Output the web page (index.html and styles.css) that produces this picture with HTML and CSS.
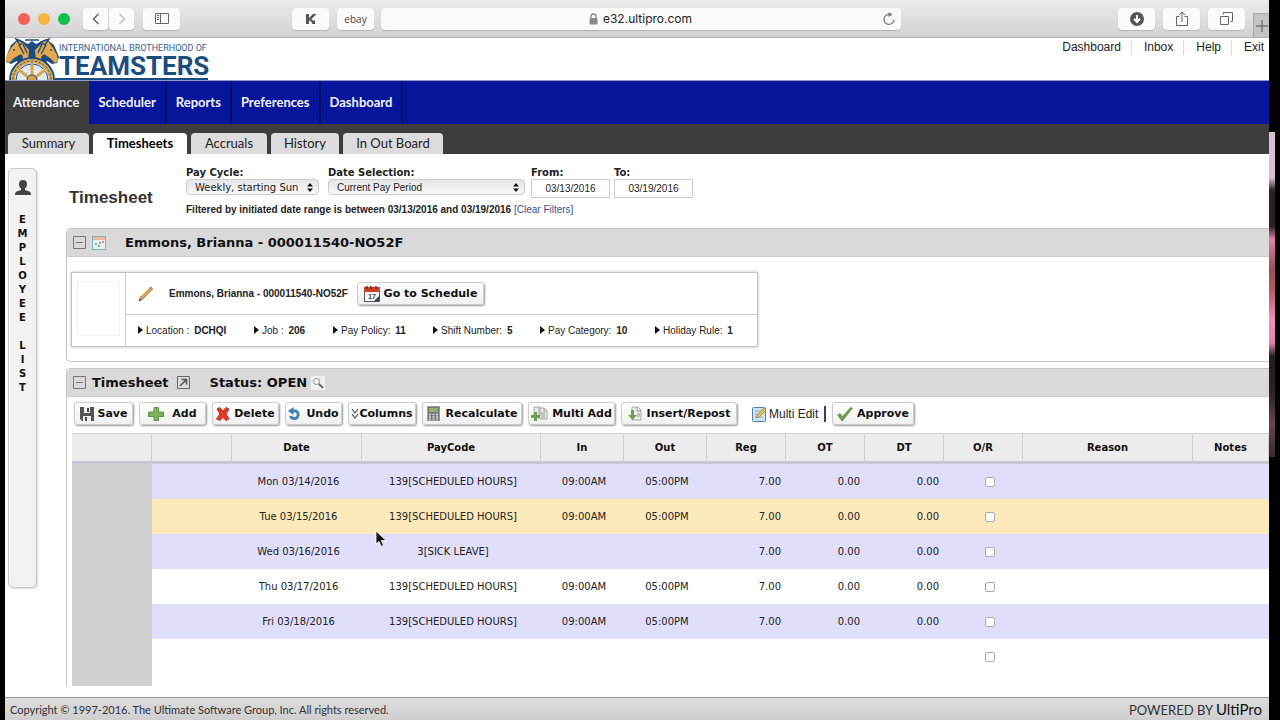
FILE: index.html
```html
<!DOCTYPE html>
<html lang="en">
<head>
  <meta charset="UTF-8">
  <meta name="viewport" content="width=device-width, initial-scale=1.0">
  <title>UltiPro - Timesheet</title>
  <link rel="stylesheet" href="styles.css">
</head>
<body>
  <div class="window">

    <!-- Browser toolbar -->
    <div class="browser">
      <div class="lights"><i class="red"></i><i class="yellow"></i><i class="green"></i></div>
      <div class="history">
        <button type="button" aria-label="Back"><svg width="12" height="14" viewBox="0 0 12 14"><path d="M8.500 2 3.500 7l5 5" fill="none" stroke="#666" stroke-width="1.500"/></svg></button>
        <button type="button" aria-label="Forward"><svg width="12" height="14" viewBox="0 0 12 14"><path d="m3.500 2 5 5-5 5" fill="none" stroke="#c4c4c4" stroke-width="1.500"/></svg></button>
      </div>
      <button type="button" class="tool sidebar-btn" aria-label="Sidebar"><svg width="16" height="13" viewBox="0 0 16 13"><path d="M1.500 1.500h13v10h-13zM6.500 1.500v10M3 3.500h2M3 5.500h2M3 7.500h2" fill="none" stroke="#666"/></svg></button>
      <button type="button" class="tool fav-k" aria-label="Favorite"><svg width="12" height="12" viewBox="0 0 12 12"><path d="M1 1h3v4l4-4h3.500L6 6.500 4 8v3H1zM6 6l3 2 1-1v4H6.500l1-1L5 8z" fill="#555"/></svg></button>
      <button type="button" class="tool fav-ebay">ebay</button>
      <div class="address">
        <div class="url">
          <svg width="9" height="12" viewBox="0 0 9 12"><path d="M2 6V3.500a2.500 2.500 0 0 1 5 0V6" fill="none" stroke="#8a8a8a" stroke-width="1.300"/><rect x="0.500" y="5" width="8" height="6.500" rx="1" fill="#8a8a8a"/></svg>
          <span>e32.ultipro.com</span>
        </div>
        <svg width="14" height="14" viewBox="0 0 14 14"><path d="M8.500 2.600A5 5 0 1 0 12 7.500" fill="none" stroke="#777" stroke-width="1.200"/><path d="M6.500 0v5l4-2.500z" fill="#777"/></svg>
      </div>
      <div class="tools-right">
        <button type="button" class="tool" aria-label="Downloads"><svg width="14" height="14" viewBox="0 0 14 14"><circle cx="7" cy="7" r="7" fill="#555"/><path d="M7 3v6M4 6.800l3 3.200 3-3.200" fill="none" stroke="#fff" stroke-width="2"/></svg></button>
        <button type="button" class="tool" aria-label="Share"><svg width="12" height="16" viewBox="0 0 12 16"><path d="M3.500 5.500H.5v9h11v-9h-3M6 11V1M3 4l3-3 3 3" fill="none" stroke="#666"/></svg></button>
        <button type="button" class="tool" aria-label="Tabs"><svg width="13" height="13" viewBox="0 0 13 13"><path d="M.5 4.500h8v8h-8zM3.500 2.500v-2h9v9h-2" fill="none" stroke="#666"/></svg></button>
      </div>
      <button type="button" class="new-tab" aria-label="New tab"><svg width="12" height="12" viewBox="0 0 12 12"><path d="M6 0v12M0 6h12" stroke="#555"/></svg></button>
    </div>

    <header class="top">
      <svg class="logo" width="210" height="43" viewBox="0 0 210 43">
        <clipPath id="logo-clip"><rect width="204" height="42"/></clipPath>
        <g clip-path="url(#logo-clip)">
          <!-- horses -->
          <path d="M13 1 23 6l4-3 4 3 10-5 8 6 5 12-2 6-5 1-5-3-3 7H15l-3-7-6 3-5-2 1-7L6 7z" fill="#1c4d80"/>
          <path d="M12 3l6 2 6 7-1 10-6 4 1-7-2-3-7 4-5 5-3-2 1-6 4-7z" fill="#e5a94a"/>
          <path d="M43 3l-6 2-7 7 1 10 6 4-1-7 3-3 6 4 5 5 3-2-1-6-4-7z" fill="#e5a94a"/>
          <path d="M11 1l4 6 3-3zM44 1l-4 6-4-3zM18 6l4 9M14 7l5 9M37 6l-4 9M41 7l-5 9M20 2l14 0" fill="#e5a94a" stroke="#1c4d80" stroke-width="1.400"/>
          <circle cx="9" cy="12" r="1" fill="#1c4d80"/><circle cx="46" cy="12" r="1" fill="#1c4d80"/>
          <!-- wheel -->
          <circle cx="27" cy="42" r="22" fill="#dfe9ee" stroke="#1c4d80" stroke-width="2"/>
          <circle cx="27" cy="42" r="19" fill="none" stroke="#d9a54c" stroke-width="4"/>
          <circle cx="27" cy="42" r="19" fill="none" stroke="#1c4d80" stroke-width="1" stroke-dasharray="2 2"/>
          <circle cx="27" cy="42" r="16" fill="none" stroke="#1c4d80"/>
          <path d="M27 42V26M27 42 14 32M27 42l13-10" stroke="#d9a54c" stroke-width="3"/>
          <circle cx="27" cy="42" r="5" fill="#d9a54c" stroke="#1c4d80"/>
        </g>
        <path d="M50 41h153" stroke="#1c4d80" stroke-width="2"/>
        <text x="54" y="13" class="logo-small">INTERNATIONAL BROTHERHOOD OF</text>
        <text x="54" y="37" class="logo-big">TEAMSTERS</text>
      </svg>
      <nav class="user-links">
        <a href="#">Dashboard</a>
        <a href="#">Inbox</a>
        <a href="#">Help</a>
        <a href="#">Exit</a>
      </nav>
    </header>

    <nav class="main-nav">
      <a href="#" class="active">Attendance</a>
      <a href="#">Scheduler</a>
      <a href="#">Reports</a>
      <a href="#">Preferences</a>
      <a href="#">Dashboard</a>
    </nav>

    <nav class="tabs">
      <a href="#" class="tab-summary">Summary</a>
      <a href="#" class="tab-timesheets active">Timesheets</a>
      <a href="#" class="tab-accruals">Accruals</a>
      <a href="#" class="tab-history">History</a>
      <a href="#" class="tab-board">In Out Board</a>
    </nav>

    <div class="content">
      <aside class="employee-list">
        <svg width="16" height="15" viewBox="0 0 16 15"><path d="M8 0c2.500 0 4 1.500 4 4 0 2-.8 3.700-2 4.600V10l4.500 1.600q1.500.6 1.500 3.400H0q0-2.800 1.500-3.400L6 10V8.600C4.800 7.700 4 6 4 4c0-2.500 1.500-4 4-4z" fill="#444"/></svg>
        <div class="letters">E<br>M<br>P<br>L<br>O<br>Y<br>E<br>E<br><br>L<br>I<br>S<br>T</div>
      </aside>

      <main>
        <form class="filters">
          <h1>Timesheet</h1>
          <div class="filter-body">
            <div class="fields">
              <div class="field cycle">
                <label for="pay-cycle">Pay Cycle:</label>
                <div class="select"><select id="pay-cycle"><option>Weekly, starting Sun</option></select>
                <svg width="6" height="9" viewBox="0 0 6 9"><path d="M3 0l3 3.500H0zM3 9l3-3.500H0z" fill="#111"/></svg></div>
              </div>
              <div class="field selection">
                <label for="date-selection">Date Selection:</label>
                <div class="select"><select id="date-selection"><option>Current Pay Period</option></select>
                <svg width="6" height="9" viewBox="0 0 6 9"><path d="M3 0l3 3.500H0zM3 9l3-3.500H0z" fill="#111"/></svg></div>
              </div>
              <div class="field date">
                <label for="from">From:</label>
                <input type="text" id="from" value="03/13/2016">
              </div>
              <div class="field date">
                <label for="to">To:</label>
                <input type="text" id="to" value="03/19/2016">
              </div>
            </div>
            <p class="filter-note">Filtered by initiated date range is between 03/13/2016 and 03/19/2016 <a href="#">[Clear Filters]</a></p>
          </div>
        </form>

        <section class="panel employee">
          <div class="panel-head">
            <button type="button" class="box" aria-label="Collapse"><svg width="13" height="13" viewBox="0 0 13 13"><path d="M.5.5h12v12H.5zM3 6.500h7" fill="none" stroke="#777"/></svg></button>
            <svg width="14" height="14" viewBox="0 0 14 14"><rect x="0.500" y="0.500" width="13" height="13" fill="#e8f0f0" stroke="#88aebd"/><path d="M1 1h12v3H1z" fill="#edb7a2"/><path d="M3 7h2v2H3zM7 6h2v2H7zM6 9h2v2H6z" fill="#88b98b"/><path d="M10 5h2v2h-2z" fill="#e58670"/></svg>
            <h2>Emmons, Brianna - 000011540-NO52F</h2>
          </div>
          <div class="card">
            <div class="photo"><div></div></div>
            <div class="card-body">
              <div class="card-name">
                <svg width="16" height="16" viewBox="0 0 16 16"><path d="M1 15l2-5 9-9 2.500 2-9 9.500z" fill="#e5a45b" stroke="#7c654e" stroke-width="0.700"/><path d="M3 10l9-9" stroke="#f7d8a8"/><path d="M1 15l1-2.500L3.500 14z" fill="#333"/><path d="M11 2l1.500-1.500 2.500 2L13.500 4z" fill="#999"/></svg>
                <strong>Emmons, Brianna - 000011540-NO52F</strong>
                <button type="button" class="btn schedule"><svg width="16" height="16" viewBox="0 0 16 16"><path d="M.5 1.500h15v14H.5z" fill="#f5f5f5" stroke="#555"/><path d="M0 1h16v5H0z" fill="#c8402c"/><path d="M3 0v3M7 0v3M12 0v3" stroke="#782519" stroke-width="1.500"/><path d="M15 10v5h-5z" fill="#444"/><text x="4" y="13" class="cal-day">17</text></svg>Go to Schedule</button>
              </div>
              <ul class="facts">
                <li class="location">Location : <b>DCHQI</b></li>
                <li class="job">Job : <b>206</b></li>
                <li class="policy">Pay Policy: <b>11</b></li>
                <li class="shift">Shift Number: <b>5</b></li>
                <li class="category">Pay Category: <b>10</b></li>
                <li>Holiday Rule: <b>1</b></li>
              </ul>
            </div>
          </div>
        </section>

        <section class="panel timesheet">
          <div class="panel-head">
            <button type="button" class="box" aria-label="Collapse"><svg width="13" height="13" viewBox="0 0 13 13"><path d="M.5.5h12v12H.5zM3 6.500h7" fill="none" stroke="#777"/></svg></button>
            <h2>Timesheet</h2>
            <button type="button" class="box open" aria-label="Open"><svg width="13" height="13" viewBox="0 0 13 13"><path d="M.5.5h12v12H.5z" fill="none" stroke="#666"/><path d="M3 10l6-6M4.500 3.500h5v5" fill="none" stroke="#555" stroke-width="1.500"/></svg></button>
            <h2>Status: OPEN</h2>
            <button type="button" class="box search" aria-label="Status details"><svg width="14" height="14" viewBox="0 0 14 14"><rect width="14" height="14" fill="#f1f1f1"/><circle cx="5.500" cy="5.500" r="3" fill="#fff" stroke="#888"/><path d="M8 8l4 4" stroke="#666" stroke-width="2"/></svg></button>
          </div>

          <div class="toolbar">
            <button type="button" class="btn save"><svg width="14" height="14" viewBox="0 0 14 14"><path d="M0 0h14v14H2l-2-2z" fill="#555"/><path d="M4 0h6v6H4zM3 9h8v5H3z" fill="#eee"/><path d="M5 10h2v4H5zM7 1h2v4H7z" fill="#444"/></svg>Save</button>
            <button type="button" class="btn add"><svg width="16" height="14" viewBox="0 0 16 14"><path d="M6 .5h4.500V5h5v4.500h-5v4H6v-4H.5V5H6z" fill="#7bb35c" stroke="#609447"/></svg>Add</button>
            <button type="button" class="btn delete"><svg width="14" height="14" viewBox="0 0 14 14"><path d="M1 2l3-1.500L7 4l3-3.500L13 2l-3 5 3 5-3 1.500-3-3-3 3L.5 12 4 7z" fill="#dd3a28" stroke="#b52f22"/></svg>Delete</button>
            <button type="button" class="btn undo"><svg width="14" height="14" viewBox="0 0 14 14"><path d="M4 4h4a4 4 0 1 1-5.500 5" fill="none" stroke="#447fb4" stroke-width="3"/><path d="M0 4 5.500 0v8z" fill="#447fb4"/></svg>Undo</button>
            <button type="button" class="btn columns"><svg width="8" height="12" viewBox="0 0 8 12"><path d="M1 1l3 4 3-4M1 6l3 4 3-4" fill="none" stroke="#555" stroke-width="1.200"/></svg>Columns</button>
            <button type="button" class="btn recalculate"><svg width="13" height="15" viewBox="0 0 13 15"><rect x="0.500" y="0.500" width="12" height="14" fill="#777" stroke="#999"/><path d="M2 2h9v4H2z" fill="#8bb36f"/><path d="M2 8.500h9M2 11h9M2 13.200h9" stroke="#ddd" stroke-width="1.300" stroke-dasharray="2 1.500"/></svg>Recalculate</button>
            <button type="button" class="btn multi-add"><svg width="17" height="15" viewBox="0 0 17 15"><path d="M3 1h6v9H3zM8 2h5l3 3v8H8z" fill="#e8e8e8" stroke="#aaa"/><path d="M13 2v3h3M10 7h4M10 9h4M10 11h4" fill="none" stroke="#999"/><path d="M3 6h3v3h3v3H6v3H3v-3H0V9h3z" fill="#719d52"/></svg>Multi Add</button>
            <button type="button" class="btn insert"><svg width="15" height="15" viewBox="0 0 15 15"><path d="M4 1h6l3 3v10H4z" fill="#eee" stroke="#aaa"/><path d="M9 1v4h4M9 8h3M9 10h3" fill="none" stroke="#999"/><path d="M3 4h3v5h3l-4.500 5L0 9h3z" fill="#719d52"/></svg>Insert/Repost</button>
            <button type="button" class="multi-edit"><svg width="14" height="16" viewBox="0 0 14 16"><rect x="0.500" y="1.500" width="13" height="14" rx="1" fill="#cfe4f3" stroke="#4d83b0"/><path d="M3 5h6M3 8h5M3 11h7" stroke="#78a6ca"/><path d="M4 12l1-3 7-7 2 2-7 7z" fill="#efbd4e" stroke="#a7803c" stroke-width="0.700"/></svg>Multi Edit</button>
            <button type="button" class="btn approve"><svg width="16" height="14" viewBox="0 0 16 14"><path d="M0 8l3-2 2.500 3L13.500 0 16 1 6 14H4.500z" fill="#6f9f52"/></svg>Approve</button>
          </div>

          <table>
            <colgroup>
              <col class="c-blank"><col class="c-blank"><col class="c-date"><col class="c-code"><col class="c-time"><col class="c-time">
              <col class="c-hours"><col class="c-hours"><col class="c-hours"><col class="c-or"><col class="c-reason"><col>
            </colgroup>
            <thead>
              <tr><th></th><th></th><th>Date</th><th>PayCode</th><th>In</th><th>Out</th><th>Reg</th><th>OT</th><th>DT</th><th>O/R</th><th>Reason</th><th>Notes</th></tr>
            </thead>
            <tbody>
              <tr class="alt"><td></td><td></td><td>Mon 03/14/2016</td><td>139[SCHEDULED HOURS]</td><td>09:00AM</td><td>05:00PM</td><td class="num">7.00</td><td class="num">0.00</td><td class="num">0.00</td><td class="or"><input type="checkbox" aria-label="Override Mon"></td><td></td><td></td></tr>
              <tr class="hover"><td></td><td></td><td>Tue 03/15/2016</td><td>139[SCHEDULED HOURS]</td><td>09:00AM</td><td>05:00PM</td><td class="num">7.00</td><td class="num">0.00</td><td class="num">0.00</td><td class="or"><input type="checkbox" aria-label="Override Tue"></td><td></td><td></td></tr>
              <tr class="alt"><td></td><td></td><td>Wed 03/16/2016</td><td>3[SICK LEAVE]</td><td></td><td></td><td class="num">7.00</td><td class="num">0.00</td><td class="num">0.00</td><td class="or"><input type="checkbox" aria-label="Override Wed"></td><td></td><td></td></tr>
              <tr><td></td><td></td><td>Thu 03/17/2016</td><td>139[SCHEDULED HOURS]</td><td>09:00AM</td><td>05:00PM</td><td class="num">7.00</td><td class="num">0.00</td><td class="num">0.00</td><td class="or"><input type="checkbox" aria-label="Override Thu"></td><td></td><td></td></tr>
              <tr class="alt"><td></td><td></td><td>Fri 03/18/2016</td><td>139[SCHEDULED HOURS]</td><td>09:00AM</td><td>05:00PM</td><td class="num">7.00</td><td class="num">0.00</td><td class="num">0.00</td><td class="or"><input type="checkbox" aria-label="Override Fri"></td><td></td><td></td></tr>
              <tr class="last"><td></td><td></td><td></td><td></td><td></td><td></td><td></td><td></td><td></td><td class="or"><input type="checkbox" aria-label="Override new row"></td><td></td><td></td></tr>
            </tbody>
          </table>
        </section>
      </main>
    </div>

    <footer>
      <span>Copyright © 1997-2016. The Ultimate Software Group, Inc. All rights reserved.</span>
      <span class="powered">POWERED BY <b>UltiPro</b></span>
    </footer>
  </div>

  <!-- desktop behind the window -->
  <div class="desktop"></div>

  <svg class="pointer" width="12" height="18" viewBox="0 0 12 18"><path d="M1 1v13l3-2.600 2.200 5 2.300-1L6.300 10.500H11z" fill="#111" stroke="#fff" stroke-width="0.800"/></svg>
</body>
</html>
```
FILE: styles.css
```css
* {
  box-sizing: border-box;
}
body {
  margin: 0;
  background: #000;
  display: flex;
  min-height: 100vh;
  font-family: "DejaVu Sans", Verdana, sans-serif;
  font-size: 11px;
  color: #222;
}
a {
  text-decoration: none;
  color: inherit;
}
button {
  font-family: inherit;
  padding: 0;
  cursor: pointer;
}
svg {
  display: block;
  flex: none;
}
.window {
  flex: 1;
  min-width: 0;
  margin-left: 5px;
  background: #fff;
  display: flex;
  flex-direction: column;
  overflow: hidden;
}
.desktop {
  width: 6px;
  height: 325px;
  margin: 132px 5px 0 0;
  background: linear-gradient(#d9bfd3 0%, #d9bfd3 14%, #2a2226 18%, #2a2226 29%, #e07fae 33%, #96505e 42%, #b45760 48%, #f78dbb 58%, #e07fae 65%, #241d1b 69%, #2b2224 80%, #6b4350 90%, #3b2a30 100%);
}

/* browser toolbar */
.browser {
  height: 38px;
  display: flex;
  align-items: center;
  background: linear-gradient(#ebebeb, #d3d3d3);
  border-bottom: 1px solid #b0b0b0;
}
.lights {
  display: flex;
  gap: 8px;
  margin-left: 13px;
}
.lights i {
  width: 12px;
  height: 12px;
  border-radius: 50%;
}
.red { background: #f4605a; }
.yellow { background: #fbb43f; }
.green { background: #14c04d; }
.history {
  display: flex;
  gap: 1px;
  margin-left: 13px;
}
.browser button {
  height: 22px;
  border: none;
  background: #fbfbfb;
  border-radius: 4px;
  box-shadow: 0 1px 1px #b5b5b5;
  display: flex;
  align-items: center;
  justify-content: center;
}
.history button {
  width: 25px;
}
.browser .tool {
  width: 37px;
  font: 10px "Open Sans", sans-serif;
  color: #444;
}
.browser .sidebar-btn { margin-left: 9px; }
.browser .fav-k { margin-left: 112px; }
.browser .fav-ebay { margin-left: 8px; }
.address {
  flex: 1;
  max-width: 520px;
  height: 22px;
  margin-left: 7px;
  padding: 0 5px 0 18px;
  display: flex;
  align-items: center;
  background: #fafafa;
  border-radius: 4px;
  box-shadow: 0 1px 1px #b0b0b0;
}
.url {
  flex: 1;
  display: flex;
  justify-content: center;
  align-items: center;
  gap: 5px;
  font: 12px Inter, sans-serif;
  color: #222;
}
.tools-right {
  display: flex;
  gap: 8px;
  margin-left: auto;
}
.browser .new-tab {
  align-self: flex-end;
  width: 16px;
  height: 24px;
  margin-left: 8px;
  border: 1px solid #aaa;
  border-width: 1px 0 0 1px;
  border-radius: 0;
  background: #c4c4c4;
  box-shadow: none;
}

/* header */
.top {
  height: 43px;
  display: flex;
  justify-content: space-between;
  border-bottom: 1px solid #8d9ac8;
}
.logo-small {
  font: 9px Roboto, sans-serif;
  fill: #30618f;
}
.logo-big {
  font: bold 26px Roboto, sans-serif;
  fill: #1c4d80;
}
.cal-day {
  font: bold 7px "Liberation Sans", Arial, sans-serif;
  fill: #444;
}
.user-links {
  display: flex;
  align-items: flex-start;
  padding-top: 2px;
  font: 12px/15px "Liberation Sans", Arial, sans-serif;
}
.user-links a {
  padding: 0 10px 0 12px;
  border-right: 1px solid #ddd;
}
.user-links a:last-child {
  padding-right: 5px;
  border: none;
}
.main-nav {
  display: flex;
  height: 43px;
  background: #07159a;
  font: bold 13px/42px Lato, sans-serif;
  color: #f2f2f8;
}
.main-nav a {
  padding: 0 9px;
  border-right: 2px solid #050e68;
}
.main-nav a.active {
  padding: 0 8px;
  background: #3d3d3d;
  border-color: #3d3d3d;
}
.tabs {
  display: flex;
  align-items: flex-end;
  gap: 4px;
  height: 30px;
  padding-left: 3px;
  background: #3d3d3d;
  font: 13px/21px Lato, sans-serif;
  text-align: center;
}
.tabs a {
  background: #dcdcdc;
  border-radius: 4px 4px 0 0;
}
.tabs a.active {
  background: #fff;
  font-weight: bold;
  color: #000;
}
.tab-summary { width: 81px; }
.tab-timesheets { width: 94px; }
.tab-accruals { width: 76px; }
.tab-history { width: 68px; }
.tab-board { width: 100px; }

/* content */
.content {
  flex: 1;
  display: flex;
}
.employee-list {
  width: 29px;
  height: 420px;
  margin: 14px 29px 0 3px;
  padding-top: 11px;
  border: 1px solid #c8c8c8;
  border-radius: 5px;
  background: #f2f2f2;
  box-shadow: 1px 1px 2px #ddd;
  display: flex;
  flex-direction: column;
  align-items: center;
}
.letters {
  margin-top: 18px;
  font-weight: bold;
  font-size: 10px;
  line-height: 14px;
  text-align: center;
  color: #111;
}
main {
  flex: 1;
  min-width: 0;
}
.filters {
  display: flex;
  height: 74px;
  padding: 12px 0 0 3px;
}
.filters h1 {
  width: 117px;
  margin: 22px 0 0;
  font: bold 17px/20px "Liberation Sans", Arial, sans-serif;
  color: #333;
}
.fields {
  display: flex;
}
.field label {
  display: block;
  font-weight: bold;
  font-size: 10px;
  line-height: 13px;
}
.cycle { width: 133px; margin-right: 9px; }
.selection { width: 197px; margin-right: 6px; }
.date { width: 79px; margin-right: 4px; }
.select {
  display: flex;
  align-items: center;
  height: 16px;
  padding-right: 5px;
  border: 1px solid #ccc;
  border-radius: 4px;
  background: linear-gradient(#e6e6e6, #f8f8f8);
}
.select select {
  flex: 1;
  height: 14px;
  padding: 0 0 0 8px;
  border: none;
  background: none;
  appearance: none;
  font: 10px "DejaVu Sans", Verdana, sans-serif;
  color: #222;
}
.selection select {
  font-family: "Liberation Sans", Arial, sans-serif;
}
.date input {
  display: block;
  width: 79px;
  height: 19px;
  padding: 0;
  border: 1px solid #ccc;
  text-align: center;
  font: 10px "Liberation Sans", Arial, sans-serif;
  color: #222;
}
.filter-note {
  margin: 6px 0 0;
  font: bold 10px/12px "Liberation Sans", Arial, sans-serif;
}
.filter-note a {
  font-weight: normal;
  color: #34508f;
}
.panel {
  border: 1px solid #c4c4c4;
  border-right: none;
  border-radius: 5px 0 0 5px;
}
.panel-head {
  display: flex;
  align-items: center;
  height: 28px;
  padding-left: 6px;
  background: #d9d9d9;
  border-bottom: 1px solid #ccc;
  border-radius: 5px 0 0 0;
}
.panel-head h2 {
  margin: 0;
  font-size: 13px;
  color: #111;
}
.box {
  border: none;
  background: none;
}
.employee {
  height: 134px;
}
.employee .box { margin-right: 6px; }
.employee h2 { margin-left: 19px; }
.card {
  display: flex;
  width: 687px;
  height: 75px;
  margin: 15px 0 0 4px;
  border: 1px solid #c4c4c4;
  box-shadow: 0 0 3px #bbb;
}
.photo {
  width: 54px;
  padding: 8px 5px 10px;
  border-right: 1px solid #ccc;
}
.photo div {
  height: 100%;
  border: 1px solid #f2f2f2;
}
.card-body {
  flex: 1;
}
.card-name {
  display: flex;
  align-items: center;
  height: 42px;
  padding-left: 12px;
  border-bottom: 1px solid #ccc;
}
.card-name strong {
  margin: 0 9px 0 15px;
  font: bold 10px "Liberation Sans", Arial, sans-serif;
}
.facts {
  display: flex;
  margin: 0;
  padding: 10px 0 0 12px;
  list-style: none;
  font: 10px/12px "Liberation Sans", Arial, sans-serif;
  white-space: nowrap;
}
.facts li::before {
  content: "";
  display: inline-block;
  margin-right: 3px;
  border: 4px solid transparent;
  border-left: 5px solid #111;
  border-right: none;
}
.facts b { margin-left: 2px; }
.location { width: 116px; }
.job { width: 79px; }
.policy { width: 100px; }
.shift { width: 107px; }
.category { width: 115px; }

.btn {
  display: flex;
  align-items: center;
  justify-content: center;
  gap: 4px;
  height: 23px;
  border: 1px solid #ccc;
  border-radius: 3px;
  background: linear-gradient(#fff, #f0f0f0);
  box-shadow: 1px 1px 2px #999;
  font-weight: bold;
  font-size: 11px;
  color: #111;
  white-space: nowrap;
}
.schedule { width: 127px; }

.timesheet {
  margin-top: 6px;
  border-bottom: none;
  border-radius: 5px 0 0 0;
}
.timesheet h2 { margin-left: 6px; }
.timesheet .open { margin: 0 14px 0 8px; }
.timesheet .search { margin-left: 4px; }
.toolbar {
  display: flex;
  align-items: center;
  gap: 6px;
  height: 36px;
  padding: 0 0 3px 7px;
}
.save { width: 59px; }
.add { width: 67px; gap: 8px; }
.delete { width: 67px; }
.undo { width: 57px; }
.columns { width: 68px; gap: 0; }
.recalculate { width: 100px; gap: 6px; }
.multi-add { width: 87px; }
.insert { width: 116px; }
.multi-edit {
  display: flex;
  align-items: center;
  gap: 3px;
  width: 74px;
  height: 16px;
  margin-left: 9px;
  border: none;
  border-right: 2px solid #444;
  background: none;
  font: 12px "Liberation Sans", Arial, sans-serif;
  color: #222;
  white-space: nowrap;
}
.approve { width: 82px; }

table {
  width: calc(100% - 5px);
  margin-left: 5px;
  border-collapse: separate;
  border-spacing: 0;
  table-layout: fixed;
}
.c-blank { width: 80px; }
.c-date { width: 130px; }
.c-code { width: 179px; }
.c-time { width: 83px; }
.c-hours { width: 79px; }
.c-or { width: 79px; }
.c-reason { width: 170px; }
th, td {
  padding: 0;
  text-align: center;
}
th {
  height: 31px;
  background: #ececec;
  border-top: 1px solid #d4d4d4;
  border-right: 1px solid #cfcfcf;
  border-bottom: 3px solid #c5c7d3;
  font-size: 10px;
  color: #111;
}
td {
  height: 35px;
  padding: 0 0 0 3px;
  font-size: 10px;
}
tbody td:first-child {
  background: #d0d0d0;
}
.alt { background: #e0dffb; }
.hover { background: #fdeabb; }
td.num {
  padding: 0 5px 0 0;
  text-align: right;
}
td.or {
  padding: 0 0 0 12px;
}
td input {
  appearance: none;
  display: block;
  width: 10px;
  height: 10px;
  margin: 0 auto;
  border: 1px solid #aaa;
  border-radius: 2px;
  background: #fff;
}
.last td {
  height: 47px;
  padding-bottom: 12px;
}

footer {
  display: flex;
  align-items: center;
  justify-content: space-between;
  height: 23px;
  padding: 0 7px 0 5px;
  background: linear-gradient(#dcdcdc, #cfcfcf);
  border-top: 1px solid #999;
  font: 11px Lato, sans-serif;
  color: #333;
}
.powered {
  font-size: 13px;
}
.powered b {
  font-size: 15px;
  font-weight: normal;
  color: #111;
}
.pointer {
  position: absolute;
  left: 375px;
  top: 530px;
}
```
